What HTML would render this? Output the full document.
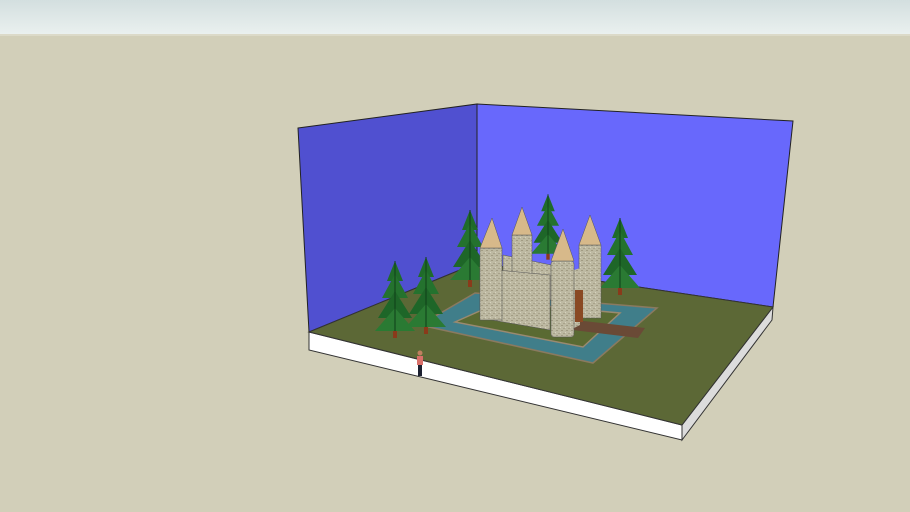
<!DOCTYPE html>
<html><head><style>
html,body{margin:0;padding:0;width:910px;height:512px;overflow:hidden;background:#d2cfb9}
.sky{position:absolute;left:0;top:0;width:910px;height:34px;background:linear-gradient(#d3dfdf,#eaf0ef)}
.ln{position:absolute;left:0;top:34px;width:910px;height:2px;background:#dcdac9}
svg{position:absolute;left:0;top:0}
</style></head><body>
<div class="sky"></div><div class="ln"></div>
<svg width="910" height="512" viewBox="0 0 910 512">
<defs>
<pattern id="st" width="5" height="5" patternUnits="userSpaceOnUse"><rect width="5" height="5" fill="#bdb9a2"/><rect x="1" y="0" width="2" height="1" fill="#a29c84"/><rect x="3" y="3" width="2" height="1" fill="#a8a28a"/><rect x="0" y="2" width="1" height="1" fill="#d6d2bf"/></pattern>
<g id="tree">
<rect x="-2" y="-8" width="4" height="10" fill="#8a3a1a"/>
<polygon points="0,-75 -8,-55 8,-55" fill="#1f6b2a"/>
<polygon points="0,-62 -13,-38 13,-38" fill="#24722e"/>
<polygon points="0,-45 -17,-18 17,-18" fill="#1e6628"/>
<polygon points="0,-28 -20,-5 20,-5" fill="#2a7a33"/>
<line x1="0" y1="-75" x2="0" y2="-5" stroke="#0f3e18" stroke-width="1"/>
</g>
</defs>
<polygon points="298,128 477,104 477,263 309,332" fill="#5050d0" stroke="#222" stroke-width="1"/>
<polygon points="477,104 793,121 773,307 477,263" fill="#6868fc" stroke="#222" stroke-width="1"/>
<polygon points="309,332 682,425 682,440 309,350" fill="#ffffff" stroke="#333" stroke-width="1"/>
<polygon points="682,425 773,307 772,320 682,440" fill="#dcdcdc" stroke="#333" stroke-width="1"/>
<polygon points="309,332 477,263 773,307 682,425" fill="#5c6836" stroke="#333" stroke-width="1"/>
<polygon points="420,325 475,293 657,308 593,363" fill="#407e8a" stroke="#8a7a60" stroke-width="1.5"/>
<polygon points="455,322 500,302 620,313 583,347" fill="#5a6a32" stroke="#9a8a70" stroke-width="1.5"/>
<polygon points="575,320 645,328 638,338 573,330" fill="#6a4a36"/>
<use href="#tree" x="470" y="285"/>
<g transform="translate(548,258) scale(0.85)"><use href="#tree"/></g>
<use href="#tree" x="620" y="293"/>
<polygon points="503,255 551,265 551,300 503,300" fill="url(#st)" stroke="#555" stroke-width=".5"/>
<rect x="512" y="235" width="20" height="40" fill="url(#st)" stroke="#555" stroke-width=".5"/>
<polygon points="512,235 522,207 532,235" fill="#d7b98a" stroke="#555" stroke-width=".5"/>
<rect x="579" y="245" width="22" height="73" fill="url(#st)" stroke="#555" stroke-width=".5"/>
<polygon points="579,245 590,215 601,245" fill="#d7b98a" stroke="#555" stroke-width=".5"/>
<polygon points="497,270 550,275 550,330 480,318 480,270" fill="url(#st)" stroke="#555" stroke-width=".5"/>
<polygon points="574,270 580,268 580,325 574,328" fill="url(#st)"/>
<rect x="575" y="290" width="8" height="32" fill="#8a4a24"/>
<rect x="480" y="248" width="22" height="72" fill="url(#st)" stroke="#555" stroke-width=".5"/>
<polygon points="480,248 492,218 502,248" fill="#d7b98a" stroke="#555" stroke-width=".5"/>
<rect x="551" y="261" width="23" height="76" rx="3" fill="url(#st)" stroke="#555" stroke-width=".5"/>
<polygon points="551,261 563,229 574,261" fill="#d7b98a" stroke="#555" stroke-width=".5"/>
<use href="#tree" x="426" y="332"/>
<use href="#tree" x="395" y="336"/>
<circle cx="420" cy="353" r="2.5" fill="#c08060"/>
<rect x="417" y="356" width="6" height="9" fill="#d9706a"/>
<rect x="418" y="365" width="4" height="11" fill="#1c2030"/>
</svg>
</body></html>
